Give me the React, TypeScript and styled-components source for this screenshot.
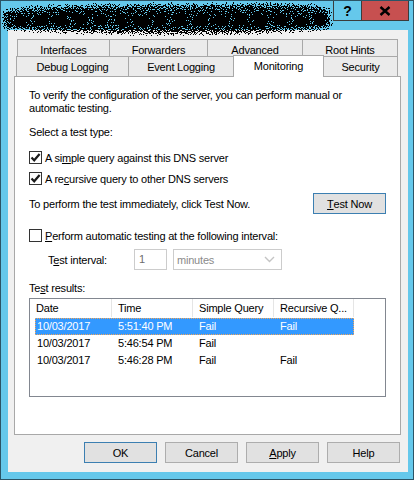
import React from "react";
import styled, { createGlobalStyle } from "styled-components";

const GlobalStyle = createGlobalStyle`
  html, body {
    margin: 0;
    padding: 0;
    background: #ffffff;
  }
  body {
    font-family: "Liberation Sans", Arial, sans-serif;
    font-size: 11px;
    letter-spacing: -0.2px;
    color: #000;
  }
`;

const results = [
  { date: "10/03/2017", time: "5:51:40 PM", simple: "Fail", recursive: "Fail" },
  { date: "10/03/2017", time: "5:46:54 PM", simple: "Fail", recursive: "" },
  { date: "10/03/2017", time: "5:46:28 PM", simple: "Fail", recursive: "Fail" },
];

const App = () => {
  return (
    <>
      <GlobalStyle />
      <Window>
        <Scribble width="340" height="40" viewBox="0 0 340 40">
          <defs>
            <filter id="scrub" x="0" y="0" width="100%" height="100%">
              <feGaussianBlur in="SourceAlpha" stdDeviation="4" result="b" />
              <feTurbulence type="fractalNoise" baseFrequency="0.95" numOctaves="1" seed="7" result="n" />
              <feColorMatrix in="n" type="matrix" values="0 0 0 0 0  0 0 0 0 0  0 0 0 0 0  3 0 0 0 -1" result="na" />
              <feComposite in="b" in2="na" operator="arithmetic" k1="0" k2="1" k3="0.6" k4="-0.52" result="s" />
              <feComponentTransfer in="s">
                <feFuncR type="linear" slope="0" intercept="0" />
                <feFuncG type="linear" slope="0" intercept="0" />
                <feFuncB type="linear" slope="0" intercept="0" />
                <feFuncA type="discrete" tableValues="0 1" />
              </feComponentTransfer>
            </filter>
          </defs>
          <g filter="url(#scrub)">
            <path d="M0 9 C 40 1, 120 3, 200 2 S 300 1, 330 6 L 332 28 C 280 34, 180 36, 90 33 S 10 31, 0 27 Z" fill="#000" />
          </g>
        </Scribble>
        <TitleBar>
          <CaptionButton>?</CaptionButton>
          <CloseButton>
            <svg width="12" height="10" viewBox="0 0 12 10">
              <path d="M1.5 1 L10.5 9 M10.5 1 L1.5 9" stroke="#000" strokeWidth="2.4" />
            </svg>
          </CloseButton>
        </TitleBar>
        <Client>
          <TabStrip>
            <TabRow $offset={3}>
              <Tab $w={93}>Interfaces</Tab>
              <Tab $w={99}>Forwarders</Tab>
              <Tab $w={96}>Advanced</Tab>
              <Tab $w={96}>Root Hints</Tab>
            </TabRow>
            <TabRow $offset={2} $front>
              <Tab $w={113}>Debug Logging</Tab>
              <Tab $w={106}>Event Logging</Tab>
              <Tab $w={91} $selected>Monitoring</Tab>
              <Tab $w={75}>Security</Tab>
            </TabRow>
          </TabStrip>
          <Panel>
            <Para>
              To verify the configuration of the server, you can perform manual or
              <br />
              automatic testing.
            </Para>
            <Label $mt={11}>Select a test type:</Label>
            <CheckRow $mt={10}>
              <CheckBox checked />
              <span>
                A si<u>m</u>ple query against this DNS server
              </span>
            </CheckRow>
            <CheckRow $mt={4}>
              <CheckBox checked />
              <span>
                A re<u>c</u>ursive query to other DNS servers
              </span>
            </CheckRow>
            <ActionRow>
              <span>To perform the test immediately, click Test Now.</span>
              <Button $default>
                <u>T</u>est Now
              </Button>
            </ActionRow>
            <CheckRow $mt={13}>
              <CheckBox />
              <span>
                <u>P</u>erform automatic testing at the following interval:
              </span>
            </CheckRow>
            <IntervalRow>
              <IntervalLabel>
                T<u>e</u>st interval:
              </IntervalLabel>
              <NumberBox>1</NumberBox>
              <SelectBox>
                <span>minutes</span>
                <svg width="11" height="7" viewBox="0 0 11 7">
                  <path d="M1 1 L5.5 5.5 L10 1" stroke="#c4c4c4" strokeWidth="1.4" fill="none" />
                </svg>
              </SelectBox>
            </IntervalRow>
            <Label $mt={12}>
              Te<u>s</u>t results:
            </Label>
            <ListView>
              <ListHeader>
                <HeaderCell $w={82}>Date</HeaderCell>
                <HeaderCell $w={81}>Time</HeaderCell>
                <HeaderCell $w={81}>Simple Query</HeaderCell>
                <HeaderCell $w={80}>Recursive Q...</HeaderCell>
              </ListHeader>
              <ListBody>
                {results.map((r, i) => (
                  <ListRow key={i} $selected={i === 0}>
                    <Cell $w={77} $pl={2}>{r.date}</Cell>
                    <Cell $w={81}>{r.time}</Cell>
                    <Cell $w={81}>{r.simple}</Cell>
                    <Cell $w={80}>{r.recursive}</Cell>
                  </ListRow>
                ))}
              </ListBody>
            </ListView>
          </Panel>
          <ButtonRow>
            <Button $default>OK</Button>
            <Button>Cancel</Button>
            <Button>
              <u>A</u>pply
            </Button>
            <Button>Help</Button>
          </ButtonRow>
        </Client>
      </Window>
    </>
  );
};

const CheckBox = ({ checked }: { checked?: boolean }) => (
  <Box>
    {checked && (
      <svg width="11" height="11" viewBox="0 0 11 11">
        <path d="M1.5 5.5 L4.2 8.3 L9.6 2" stroke="#1b1b1b" strokeWidth="2.2" fill="none" />
      </svg>
    )}
  </Box>
);

export default App;

const Window = styled.div`
  position: relative;
  width: 414px;
  height: 480px;
  box-sizing: border-box;
  border: 1px solid #2b5466;
  background: #65c8eb;
  display: flex;
  flex-direction: column;
  overflow: hidden;
`;

const Scribble = styled.svg`
  position: absolute;
  left: 0;
  top: 0;
  z-index: 5;
  pointer-events: none;
`;

const TitleBar = styled.div`
  height: 30px;
  flex: none;
  display: flex;
  justify-content: flex-end;
  align-items: flex-start;
  padding-right: 4px;
  margin-top: -1px;
`;

const CaptionButton = styled.div`
  width: 29px;
  height: 21px;
  box-sizing: border-box;
  border: 1px solid #3b3b3b;
  background: #65c8eb;
  display: flex;
  align-items: center;
  justify-content: center;
  font-weight: bold;
  font-size: 14px;
  line-height: 1;
`;

const CloseButton = styled(CaptionButton)`
  width: 48px;
  margin-left: -1px;
  background: #c75050;
`;

const Client = styled.div`
  flex: 1;
  margin: 0 5px 7px 7px;
  background: #f0f0f0;
  padding: 9px 7px 0 6px;
  display: flex;
  flex-direction: column;
`;

const TabStrip = styled.div`
  height: 37px;
  display: flex;
  flex-direction: column;
`;

const TabRow = styled.div<{ $offset: number; $front?: boolean }>`
  display: flex;
  padding-left: ${(p) => p.$offset}px;
  height: ${(p) => (p.$front ? 20 : 17)}px;
  align-items: flex-start;
`;

const Tab = styled.div<{ $w: number; $selected?: boolean }>`
  position: relative;
  z-index: ${(p) => (p.$selected ? 2 : 0)};
  width: ${(p) => p.$w}px;
  height: ${(p) => (p.$selected ? 22 : 20)}px;
  margin-top: ${(p) => (p.$selected ? -1 : 0)}px;
  margin-right: -1px;
  box-sizing: border-box;
  border: 1px solid #a8a8a8;
  border-bottom: none;
  background: ${(p) => (p.$selected ? "#ffffff" : "#ebebeb")};
  text-align: center;
  padding-top: 1px;
  line-height: ${(p) => (p.$selected ? 18 : 19)}px;
  white-space: nowrap;
`;

const Panel = styled.div`
  height: 359px;
  box-sizing: border-box;
  border: 1px solid #a8a8a8;
  background: #ffffff;
  padding: 12px 14px 0 14px;
  display: flex;
  flex-direction: column;
`;

const Para = styled.div`
  line-height: 13px;
`;

const Label = styled.div<{ $mt: number }>`
  margin-top: ${(p) => p.$mt}px;
  line-height: 13px;
`;

const CheckRow = styled.div<{ $mt: number }>`
  margin-top: ${(p) => p.$mt}px;
  height: 17px;
  display: flex;
  align-items: center;
  gap: 3px;
`;

const Box = styled.div`
  width: 13px;
  height: 13px;
  box-sizing: border-box;
  border: 1px solid #333333;
  background: #ffffff;
  display: flex;
  align-items: center;
  justify-content: center;
`;

const ActionRow = styled.div`
  margin-top: 6px;
  height: 21px;
  display: flex;
  align-items: center;
  justify-content: space-between;
`;

const Button = styled.div<{ $default?: boolean }>`
  width: 73px;
  height: 21px;
  box-sizing: border-box;
  border: 1px solid ${(p) => (p.$default ? "#3c7fb1" : "#adadad")};
  background: #e1e1e1;
  display: flex;
  align-items: center;
  justify-content: center;
  white-space: nowrap;
`;

const IntervalRow = styled.div`
  margin-top: 5px;
  height: 21px;
  display: flex;
  align-items: center;
  padding-left: 19px;
`;

const IntervalLabel = styled.div`
  width: 86px;
`;

const NumberBox = styled.div`
  width: 33px;
  height: 21px;
  box-sizing: border-box;
  border: 1px solid #cccccc;
  color: #6d6d6d;
  padding-left: 4px;
  line-height: 19px;
`;

const SelectBox = styled.div`
  margin-left: 6px;
  width: 109px;
  height: 21px;
  box-sizing: border-box;
  border: 1px solid #cccccc;
  color: #8a8a8a;
  display: flex;
  align-items: center;
  justify-content: space-between;
  padding: 0 6px 0 3px;
`;

const ListView = styled.div`
  margin-top: 3px;
  height: 99px;
  box-sizing: border-box;
  border: 1px solid #828790;
  background: #ffffff;
`;

const ListHeader = styled.div`
  display: flex;
  height: 18px;
`;

const HeaderCell = styled.div<{ $w: number }>`
  width: ${(p) => p.$w}px;
  box-sizing: border-box;
  border-right: 1px solid #e5e5e5;
  padding-left: 6px;
  line-height: 18px;
  white-space: nowrap;
  overflow: hidden;
`;

const ListBody = styled.div`
  padding-top: 1px;
`;

const ListRow = styled.div<{ $selected?: boolean }>`
  display: flex;
  margin-left: 5px;
  width: 319px;
  height: 17px;
  box-sizing: border-box;
  background: ${(p) => (p.$selected ? "#3399ff" : "transparent")};
  color: ${(p) => (p.$selected ? "#ffffff" : "#000000")};
  outline: ${(p) => (p.$selected ? "1px dotted #f2a65a" : "none")};
  outline-offset: -1px;
`;

const Cell = styled.div<{ $w: number; $pl?: number }>`
  width: ${(p) => p.$w}px;
  padding-left: ${(p) => p.$pl ?? 6}px;
  box-sizing: border-box;
  line-height: 17px;
  white-space: nowrap;
`;

const ButtonRow = styled.div`
  margin-top: 7px;
  margin-right: 1px;
  display: flex;
  justify-content: flex-end;
  gap: 8px;
`;
